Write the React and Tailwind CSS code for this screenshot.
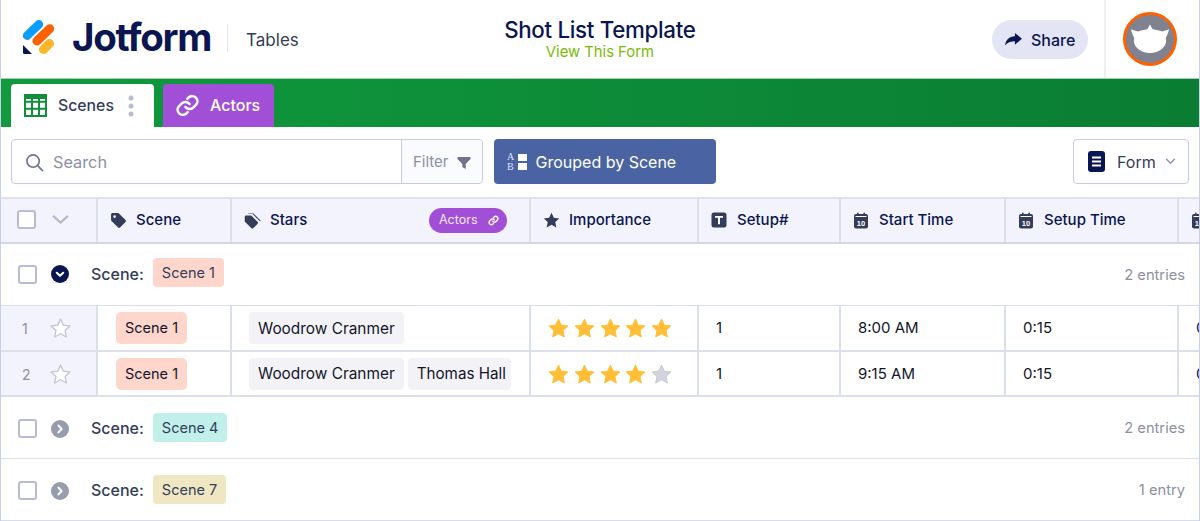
import React from "react";

const STAR = "M12 2.2l2.95 6.3 6.85.85-5.05 4.7 1.33 6.8L12 17.5l-6.08 3.35 1.33-6.8L2.2 9.35l6.85-.85z";

function Star({ className, fill = "none", stroke = "none", sw = 1.4 }) {
  return (
    <svg viewBox="0 0 24 24" className={className} fill={fill} stroke={stroke} strokeWidth={sw} strokeLinejoin="round">
      <path d={STAR} />
    </svg>
  );
}

function Logo() {
  return (
    <svg viewBox="0 0 32 34" className="w-[32px] h-[34px]">
      <rect x="-4.25" y="-12.4" width="8.5" height="24.8" rx="4.25" transform="translate(10 10) rotate(46)" fill="#0a9cff" />
      <rect x="-4.5" y="-13.3" width="9" height="26.6" rx="4.5" transform="translate(20.3 14.8) rotate(46)" fill="#ff6100" />
      <rect x="-4.5" y="-8.7" width="9" height="17.4" rx="4.5" transform="translate(23.5 26.5) rotate(46)" fill="#ffb629" />
      <path d="M0 25 L9 34 H1.5 A1.5 1.5 0 0 1 0 32.5 Z" fill="#0a1551" />
    </svg>
  );
}

function Tag({ className }) {
  return (
    <svg viewBox="0 0 16 16" className={className} fill="#343c5a">
      <path d="M1 2.4C1 1.6 1.6 1 2.4 1h5c.4 0 .7.1 1 .4l6 6c.8.8.8 1.5 0 2.3l-4.700 4.700c-.8.8-1.500.8-2.300 0l-6-6c-.3-.3-.4-.6-.4-1zM4.300 3a1.300 1.300 0 1 0 0 2.600 1.300 1.300 0 0 0 0-2.600z" fillRule="evenodd" />
    </svg>
  );
}

function Tags({ className }) {
  return (
    <svg viewBox="0 0 16 16" className={className} fill="#343c5a">
      <path d="M.7 4.400c0-.7.5-1.200 1.200-1.200h4.300c.4 0 .7.1.9.4l5.600 5.600c.7.7.7 1.300 0 2l-3.900 3.900c-.7.7-1.300.7-2 0L1.100 9.500c-.3-.2-.4-.5-.4-.9z" />
      <path d="M4 1.300h4.300c.4 0 .7.100.9.400l5.900 5.900c.5.500.5.900.1 1.400L8.400 2.200C8.100 1.900 7.800 1.800 7.400 1.800H4z" />
    </svg>
  );
}

function Calendar({ className }) {
  return (
    <svg viewBox="0 0 16 17" className={className}>
      <rect x="1" y="2" width="14" height="14.500" rx="2" fill="#343c5a" />
      <rect x="4" y="0.500" width="1.500" height="3.200" rx=".7" fill="#343c5a" />
      <rect x="10.500" y="0.500" width="1.500" height="3.200" rx=".7" fill="#343c5a" />
      <rect x="2.500" y="4" width="11" height="1" fill="#fff" />
      <text x="8" y="14" textAnchor="middle" fontSize="7.500" fontWeight="700" fill="#fff" fontFamily="Liberation Sans, sans-serif">10</text>
    </svg>
  );
}

function TextIcon({ className }) {
  return (
    <svg viewBox="0 0 16 16" className={className}>
      <rect x="0.500" y="0.500" width="15" height="15" rx="2.500" fill="#343c5a" />
      <path d="M4 4h8v1.800H9v6.400H7V5.800H4z" fill="#fff" />
    </svg>
  );
}

function LinkIcon({ className, sw = 2.4 }) {
  return (
    <svg viewBox="0 0 24 24" className={className} fill="none" stroke="#fff" strokeWidth={sw} strokeLinecap="round" strokeLinejoin="round">
      <path d="M10 13.500a5 5 0 0 0 7.500.5l3-3a5 5 0 0 0-7-7l-1.700 1.700" />
      <path d="M14 10.500a5 5 0 0 0-7.500-.5l-3 3a5 5 0 0 0 7 7l1.700-1.700" />
    </svg>
  );
}

function Check() {
  return <span className="block w-[19px] h-[19px] rounded-[3px] border-2 border-[#b8bbd3] bg-white shrink-0" />;
}

function Chip({ children, className }) {
  return (
    <span className={`inline-flex items-center h-[29px] px-[9px] rounded-[4px] text-[14.5px] text-[#343c5a] ${className}`}>
      {children}
    </span>
  );
}

function Circle({ open }) {
  return (
    <svg viewBox="0 0 18 18" className="w-[18px] h-[18px] shrink-0">
      <circle cx="9" cy="9" r="9" fill={open ? "#0a1551" : "#979dae"} />
      <path d={open ? "M5.800 7.800L9 10.800l3.200-3" : "M7.500 5.600L10.600 9l-3.100 3.400"} fill="none" stroke="#fff" strokeWidth="2.100" strokeLinecap="round" strokeLinejoin="round" />
    </svg>
  );
}

function Group({ open, chip, chipClass, entries }) {
  return (
    <div className="flex items-center h-[62px] border-b border-[#dadcea] pl-[17px] pr-[14px]">
      <span className={open ? "" : "mt-[2px]"}><Check /></span>
      <span className={open ? "ml-[14px]" : "ml-[14px] mt-[2px]"}><Circle open={open} /></span>
      <span className="ml-[22px] text-[16px] font-medium text-[#343c5a]">Scene:</span>
      <Chip className={`ml-[9px] ${chipClass}`}>{chip}</Chip>
      <span className="ml-auto text-[14.700px] text-[#8d90a3] pt-[1px]">{entries}</span>
    </div>
  );
}

function Row({ n, names, stars }) {
  return (
    <div className="flex h-[46px] border-b-2 border-[#dadfea] text-[15px] text-[#0a1551]">
      <div className="w-[97px] shrink-0 bg-[#f3f3fe] border-r-2 border-[#dadfea] flex items-center pl-[21px] pt-[1px] text-[14px] text-[#8d90a3]">
        <span className="w-[8px]">{n}</span>
        <Star className="w-[23px] h-[23px] ml-[19px]" fill="#fff" stroke="#c3c6d6" />
      </div>
      <div className="w-[134px] shrink-0 border-r-2 border-[#dadfea] flex items-center pl-[18px] pt-[1px]">
        <Chip className="bg-[#ffd6cb] !text-[#14152b] !h-[32px] !rounded-[5px]">Scene 1</Chip>
      </div>
      <div className="w-[299px] shrink-0 border-r-2 border-[#dadfea] flex items-center pl-[17px] pt-[1px] gap-[4px]">
        {names.map((x, i) => (
          <span key={x} className={i === 1
            ? "inline-flex items-center h-[32px] w-[103px] pl-[9px] rounded-[4px] bg-[#f3f3f7] text-[15.200px] text-[#14152b] whitespace-nowrap overflow-hidden"
            : "inline-flex items-center h-[32px] px-[9px] rounded-[4px] bg-[#f3f3f7] text-[15.400px] text-[#14152b]"}>{x}</span>
        ))}
      </div>
      <div className="w-[168px] shrink-0 border-r-2 border-[#dadfea] flex items-center pl-[16px] pt-[1px] gap-[2.800px]">
        {[1, 2, 3, 4, 5].map((i) => (
          <Star key={i} className="w-[23px] h-[23px]" fill={i <= stars ? "#ffbe35" : "#d3d4de"} stroke={i <= stars ? "#ffbe35" : "#c3c6d6"} sw={1} />
        ))}
      </div>
      <Cell w="w-[142px]">1</Cell>
      <Cell w="w-[165px]">{n === 1 ? "8:00 AM" : "9:15 AM"}</Cell>
      <Cell w="w-[173px]">0:15</Cell>
      <div className="flex-1 flex items-center pl-[17px] pt-[1px] overflow-hidden">0</div>
    </div>
  );
}

function Cell({ w, children }) {
  return (
    <div className={`${w} shrink-0 border-r-2 border-[#dadfea] flex items-center pl-[17px] pt-[1px] text-[#14152b] text-[15px]`}>{children}</div>
  );
}

function Th({ w, icon, label, extra }) {
  return (
    <div className={`${w} shrink-0 border-r-2 border-[#dadfea] flex items-center pl-[12px] pb-[1px] gap-[9px]`}>
      {icon}
      <span className="text-[15px] font-medium text-[#0a1551]">{label}</span>
      {extra}
    </div>
  );
}

export default function App() {
  return (
    <div className="w-[1200px] h-[521px] overflow-hidden bg-white border-x border-[#c8ceed] font-['Inter','Noto_Sans',sans-serif] flex flex-col">
      <header className="h-[79px] shrink-0 flex items-center relative border-b border-[#a8d0b4]">
        <div className="ml-[22px] mt-[-4px]"><Logo /></div>
        <span className="ml-[17px] text-[38.500px] font-bold tracking-[-1.300px] text-[#0a1551] leading-none mt-[-3px]">Jotform</span>
        <span className="ml-[16px] w-px h-[28px] bg-[#e3e5f0] mt-[-2px]" />
        <span className="ml-[18px] text-[17px] text-[#343c5a] mt-[4px]">Tables</span>
        <div className="flex-1 flex flex-col items-center mr-[3px] ml-[-88px]">
          <div className="text-[22.300px] font-medium text-[#0a1551] leading-[26px] tracking-[-0.300px]">Shot List Template</div>
          <div className="text-[14.800px] text-[#78bb07] leading-[18px]">View This Form</div>
        </div>
        <button className="w-[96px] h-[39px] mr-[16px] rounded-full bg-[#e3e5f5] flex items-center pl-[12px] gap-[8px] text-[16px] font-medium text-[#0a1551] mt-[1px]">
          <svg viewBox="0 0 20 16" className="w-[19px] h-[15px]" fill="#0a1551"><path d="M11.500 1l7.500 6.300-7.500 6.200V9.800C7 9.800 3.500 11 1 14.500 1.500 9 5 4.800 11.500 4.600z" /></svg>
          Share
        </button>
        <div className="w-[95px] h-full border-l-2 border-[#eeeef3] flex items-center justify-center">
          <svg viewBox="0 0 54 54" className="w-[54px] h-[54px] ml-[-5px]">
            <circle cx="27" cy="27" r="25.500" fill="#80828f" stroke="#ff6100" strokeWidth="3" />
            <path d="M8 17.300L14.700 19.600Q18.500 18 24.300 17.300L27 12.500L29.700 17.300Q35.500 18 39.300 19.600L46 17.300c-.7 3.500-1.900 6.200-3.300 8.700.5 1.700.6 3.200.3 4.600C41.500 37 35 41 27 41s-14.500-4-16-10.400c-.3-1.400-.2-2.900.3-4.600C9.900 23.500 8.700 20.800 8 17.300z" fill="#fff" />
          </svg>
        </div>
      </header>

      <div className="h-[48px] shrink-0 bg-gradient-to-r from-[#109a3d] to-[#0a7d33] flex items-end pl-[10px] gap-[9px]">
        <div className="w-[143px] h-[43px] bg-white rounded-t-[4px] flex items-center pl-[13px]">
          <svg viewBox="0 0 23 23" className="w-[23px] h-[23px]" fill="none" stroke="#0f8f3a" strokeWidth="2">
            <rect x="1" y="1" width="21" height="21" fill="#fff" />
            <path d="M1 7.700h21M1 14.700h21M8 1v21M15 1v21" />
            <path d="M1 1h21v3H1z" fill="#0f8f3a" />
          </svg>
          <span className="ml-[11px] text-[15.800px] font-medium text-[#343c5a]">Scenes</span>
          <svg viewBox="0 0 6 22" className="w-[6px] h-[22px] ml-[14px]" fill="#b8bbd3">
            <circle cx="3" cy="3" r="2.500" /><circle cx="3" cy="11" r="2.500" /><circle cx="3" cy="19" r="2.500" />
          </svg>
        </div>
        <div className="w-[111px] h-[43px] bg-[#a14fd6] rounded-t-[4px] flex items-center pl-[12px] pb-[1px] gap-[10px] text-[16px] font-medium text-white">
          <LinkIcon className="w-[25px] h-[25px]" />
          Actors
        </div>
      </div>

      <div className="h-[70px] shrink-0 flex items-center pl-[10px] pr-[10px]">
        <div className="w-[472px] h-[45px] border border-[#c8cbdd] rounded-[4px] flex items-center text-[16.300px] text-[#8d90a3] mt-[-1px]">
          <div className="flex-1 flex items-center pl-[13px] gap-[9px] pt-[1px]">
            <svg viewBox="0 0 20 20" className="w-[19px] h-[19px]" fill="none" stroke="#6f7488" strokeWidth="1.700" strokeLinecap="round"><circle cx="8.500" cy="8.500" r="6.500" /><path d="M13.500 13.500l5 5" /></svg>
            Search
          </div>
          <div className="w-[81px] h-full border-l border-[#c8cbdd] bg-[#fafbfe] rounded-r-[4px] flex items-center pl-[11px] pt-[2px] gap-[8px] text-[15px]">
            Filter
            <svg viewBox="0 0 14 14" className="w-[14px] h-[14px]" fill="#6f7488"><path d="M.500 1h13v2L8.700 8v5L5.300 11V8L.500 3z" /></svg>
          </div>
        </div>
        <div className="ml-[11px] w-[222px] h-[45px] bg-[#4a64a3] rounded-[4px] flex items-center pl-[13px] text-white text-[16px] mt-[-1px]">
          <span className="w-[8px] text-[10px] leading-[9.500px] font-['Liberation_Serif',serif] text-[#dfe4f2]">A<br />B</span>
          <span className="w-[9px] ml-[2.500px] flex flex-col gap-[2px]"><i className="block h-[7px] bg-white" /><i className="block h-[7px] bg-white" /></span>
          <span className="ml-[9px] pt-[1px]">Grouped by Scene</span>
        </div>
        <div className="ml-auto w-[116px] h-[45px] border border-[#c8cbdd] rounded-[4px] flex items-center pl-[14px] text-[16px] text-[#343c5a] mt-[-1px]">
          <svg viewBox="0 0 17 21" className="w-[17px] h-[21px]">
            <rect width="17" height="21" rx="3" fill="#0a1551" />
            <path d="M4 6.500h9M4 10.500h9M4 14.500h9" stroke="#fff" strokeWidth="1.800" />
          </svg>
          <span className="ml-[12px]">Form</span>
          <svg viewBox="0 0 12 8" className="w-[11px] h-[7px] ml-[9px]" fill="none" stroke="#9296ad" strokeWidth="1.700" strokeLinecap="round"><path d="M1.500 1.500L6 6l4.500-4.500" /></svg>
        </div>
      </div>

      <div className="h-[47px] shrink-0 flex bg-[#f3f3fe] border-y-2 border-t-[#dfe1ee] border-b-[#d4d6e4] ml-[-1px]">
        <div className="w-[98px] shrink-0 border-r-2 border-[#dadfea] flex items-center pl-[17px] pb-[2px] bg-[#f3f3fe]">
          <Check />
          <svg viewBox="0 0 18 11" className="w-[17px] h-[10px] ml-[16px]" fill="none" stroke="#b5b8c9" strokeWidth="2.300" strokeLinecap="round" strokeLinejoin="round"><path d="M1.500 1.500L9 8.500l7.500-7" /></svg>
        </div>
        <Th w="w-[134px]" icon={<Tag className="w-[17px] h-[17px]" />} label="Scene" />
        <Th w="w-[299px]" icon={<Tags className="w-[17px] h-[17px]" />} label="Stars" extra={
          <span className="ml-auto mr-[22px] w-[78px] h-[25px] rounded-full bg-[#a14fd6] flex items-center pl-[10px] gap-[10px] text-[12.500px] text-[#f3e7fb]">
            Actors
            <LinkIcon className="w-[11px] h-[11px]" sw={3} />
          </span>
        } />
        <Th w="w-[168px]" icon={<Star className="w-[19px] h-[19px] -ml-[1px] -mr-[1px]" fill="#343c5a" />} label="Importance" />
        <Th w="w-[142px]" icon={<TextIcon className="w-[16px] h-[16px] mr-[1px]" />} label="Setup#" />
        <Th w="w-[165px]" icon={<Calendar className="w-[16px] h-[17px] mr-[1px]" />} label="Start Time" />
        <Th w="w-[173px]" icon={<Calendar className="w-[16px] h-[17px] mr-[1px]" />} label="Setup Time" />
        <div className="flex-1 flex items-center pl-[12px] pb-[1px]"><Calendar className="w-[16px] h-[17px] shrink-0" /></div>
      </div>

      <Group open chip="Scene 1" chipClass="bg-[#ffd6cb] mb-[4px]" entries="2 entries" />
      <Row n={1} names={["Woodrow Cranmer"]} stars={5} />
      <Row n={2} names={["Woodrow Cranmer", "Thomas Hall"]} stars={4} />
      <Group chip="Scene 4" chipClass="bg-[#c0f0e9]" entries="2 entries" />
      <Group chip="Scene 7" chipClass="bg-[#eee7c2]" entries="1 entry" />
    </div>
  );
}
